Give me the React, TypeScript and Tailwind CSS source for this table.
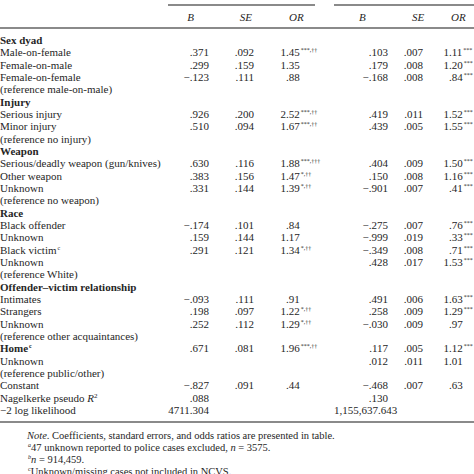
type Row = {
  label: string;
  kind?: "head" | "ref";
  sup?: string;
  b1?: string;
  se1?: string;
  or1?: [string, string, string?];
  b2?: string;
  se2?: string;
  or2?: [string, string, string?];
};

const rows: Row[] = [
  { label: "Sex dyad", kind: "head" },
  { label: "Male-on-female", b1: ".371", se1: ".092", or1: ["1", ".45", "***,††"], b2: ".103", se2: ".007", or2: ["1", ".11", "***"] },
  { label: "Female-on-male", b1: ".299", se1: ".159", or1: ["1", ".35"], b2: ".179", se2: ".008", or2: ["1", ".20", "***"] },
  { label: "Female-on-female", b1: "−.123", se1: ".111", or1: ["", ".88"], b2: "−.168", se2: ".008", or2: ["", ".84", "***"] },
  { label: "(reference male-on-male)", kind: "ref" },
  { label: "Injury", kind: "head" },
  { label: "Serious injury", b1: ".926", se1: ".200", or1: ["2", ".52", "***,††"], b2: ".419", se2: ".011", or2: ["1", ".52", "***"] },
  { label: "Minor injury", b1: ".510", se1: ".094", or1: ["1", ".67", "***,††"], b2: ".439", se2: ".005", or2: ["1", ".55", "***"] },
  { label: "(reference no injury)", kind: "ref" },
  { label: "Weapon", kind: "head" },
  { label: "Serious/deadly weapon (gun/knives)", b1: ".630", se1: ".116", or1: ["1", ".88", "***,†††"], b2: ".404", se2: ".009", or2: ["1", ".50", "***"] },
  { label: "Other weapon", b1: ".383", se1: ".156", or1: ["1", ".47", "*,††"], b2: ".150", se2: ".008", or2: ["1", ".16", "***"] },
  { label: "Unknown", b1: ".331", se1: ".144", or1: ["1", ".39", "*,††"], b2: "−.901", se2: ".007", or2: ["", ".41", "***"] },
  { label: "(reference no weapon)", kind: "ref" },
  { label: "Race", kind: "head" },
  { label: "Black offender", b1: "−.174", se1: ".101", or1: ["", ".84"], b2: "−.275", se2: ".007", or2: ["", ".76", "***"] },
  { label: "Unknown", b1: ".159", se1: ".144", or1: ["1", ".17"], b2: "−.999", se2: ".019", or2: ["", ".33", "***"] },
  { label: "Black victim", sup: "c", b1: ".291", se1: ".121", or1: ["1", ".34", "*,††"], b2: "−.349", se2: ".008", or2: ["", ".71", "***"] },
  { label: "Unknown", b2: ".428", se2: ".017", or2: ["1", ".53", "***"] },
  { label: "(reference White)", kind: "ref" },
  { label: "Offender–victim relationship", kind: "head" },
  { label: "Intimates", b1: "−.093", se1: ".111", or1: ["", ".91"], b2: ".491", se2: ".006", or2: ["1", ".63", "***"] },
  { label: "Strangers", b1: ".198", se1: ".097", or1: ["1", ".22", "*,††"], b2: ".258", se2: ".009", or2: ["1", ".29", "***"] },
  { label: "Unknown", b1: ".252", se1: ".112", or1: ["1", ".29", "*,††"], b2: "−.030", se2: ".009", or2: ["", ".97"] },
  { label: "(reference other acquaintances)", kind: "ref" },
  { label: "Home", kind: "head", sup: "c", b1: ".671", se1: ".081", or1: ["1", ".96", "***,††"], b2: ".117", se2: ".005", or2: ["1", ".12", "***"] },
  { label: "Unknown", b2: ".012", se2: ".011", or2: ["1", ".01"] },
  { label: "(reference public/other)", kind: "ref" },
  { label: "Constant", b1: "−.827", se1: ".091", or1: ["", ".44"], b2: "−.468", se2: ".007", or2: ["", ".63"] },
  { label: "Nagelkerke pseudo", sup: "R2", b1: ".088", b2: ".130" },
  { label: "−2 log likelihood", b1: "4711.304", b2: "1,155,637.643" },
];

const grid = "grid grid-cols-[165px_48px_45px_76px_58px_35px_47px]";

// small raised marker, sits near the cap height of the figures
function Mark({ children, italic }: { children: React.ReactNode; italic?: boolean }) {
  return (
    <span className={`relative -top-[4px] text-[6px] leading-none ml-[1px] ${italic ? "italic" : ""}`}>
      {children}
    </span>
  );
}

function Odds({ v, w }: { v?: [string, string, string?]; w: string }) {
  if (!v) return <div />;
  return (
    <div className="whitespace-nowrap">
      <span className={`inline-block text-right ${w}`}>{v[0]}</span>
      {v[1]}
      {v[2] && <Mark>{v[2]}</Mark>}
    </div>
  );
}

function Label({ r }: { r: Row }) {
  const sup =
    r.sup === "R2" ? (
      <>
        {" "}
        <i>R</i>
        <span className="relative -top-[4px] text-[7px] leading-none">2</span>
      </>
    ) : r.sup ? (
      <Mark>{r.sup}</Mark>
    ) : null;
  return (
    <div className={`whitespace-nowrap ${r.kind === "head" ? "font-bold" : ""}`}>
      {r.label}
      {sup}
    </div>
  );
}

export default function App() {
  return (
    <div
      className="w-[474px] h-[474px] overflow-hidden bg-white text-[#262626] text-[11px]"
      style={{ fontFamily: '"Liberation Serif", "Times New Roman", serif' }}
    >
      <div className="flex pt-[4px]">
        <div className="ml-[168px] w-[147px] h-[2px] bg-[#8a8a8a]" />
        <div className="ml-[19px] flex-1 h-[2px] bg-[#8a8a8a]" />
      </div>
      <div className={`${grid} h-[21px] items-center italic pt-[1px]`}>
        <div />
        <div className="text-right pr-[19px]">B</div>
        <div className="text-right pr-[6px]">SE</div>
        <div className="pl-[31px]">OR</div>
        <div className="pl-[25px]">B</div>
        <div className="pl-[20px]">SE</div>
        <div className="pl-[24px]">OR</div>
      </div>
      <div className="h-[2px] bg-[#8a8a8a]" />
      <div className="pt-[5px] pb-[5px]">
        {rows.map((r, i) => (
          <div key={i} className={`${grid} h-[12.33px] leading-[12.33px]`}>
            <Label r={r} />
            <div className="text-right pr-[4px]">{r.b1}</div>
            <div className="text-right pr-[4px]">{r.se1}</div>
            <Odds v={r.or1} w="w-[28px]" />
            <div className="text-right pr-[4px] whitespace-nowrap">{r.b2}</div>
            <div className="text-right pr-[4px]">{r.se2}</div>
            <Odds v={r.or2} w="w-[22px]" />
          </div>
        ))}
      </div>
      <div className="h-[2px] bg-[#8a8a8a]" />
      <div className="pl-[27px] pt-[7px] text-[10.5px] leading-[12px]">
        <div>
          <i>Note</i>. Coefficients, standard errors, and odds ratios are presented in table.
        </div>
        <div>
          <Mark italic>a</Mark>47 unknown reported to police cases excluded, <i>n</i> = 3575.
        </div>
        <div>
          <Mark italic>b</Mark>
          <i>n</i> = 914,459.
        </div>
        <div>
          <Mark>c</Mark>Unknown/missing cases not included in NCVS.
        </div>
      </div>
    </div>
  );
}
